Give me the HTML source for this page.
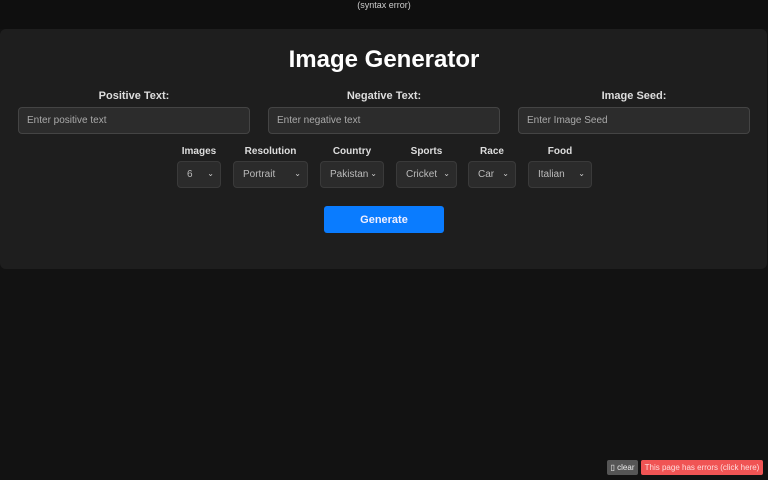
<!DOCTYPE html><html><head><style>
body{margin:0;width:768px;height:480px;background:#121212;font-family:"Liberation Sans",sans-serif;position:relative;overflow:hidden;color:#eee}
.a{position:absolute}
.top{left:0;top:0;width:768px;height:29px;background:#0f0f0f;text-align:center;font-size:9px;color:#ccc;line-height:10px}
.card{left:0;top:29px;width:767px;height:240px;background:#1e1e1e;border-radius:6px}
h1{position:absolute;left:0;width:768px;top:46px;margin:0;text-align:center;font-size:24px;color:#fff;font-weight:bold}
.lb{font-size:11px;font-weight:bold;color:#ddd;text-align:center}
.in{background:#2c2c2c;border:1px solid #444;border-radius:4px;font-size:10px;color:#aaa;line-height:26px;padding-left:8px;box-sizing:border-box;height:27px}
.sl{top:161px;height:27px;background:#2b2b2b;border:1px solid #3a3a3a;border-radius:4px;box-sizing:border-box;font-size:10px;color:#bbb;line-height:26px}
.sl span{position:absolute;left:9px}
.sl i{position:absolute;right:6px;top:-1px;font-style:normal;font-size:8px;color:#ccc}
.sm{font-size:10px;font-weight:bold;color:#ddd;text-align:center;top:146px}
</style></head><body>
<div class="a top">(syntax error)</div>
<div class="a card"></div>
<h1>Image Generator</h1>
<div class="a lb" style="left:18px;width:232px;top:90px">Positive Text:</div>
<div class="a lb" style="left:268px;width:232px;top:90px">Negative Text:</div>
<div class="a lb" style="left:518px;width:232px;top:90px">Image Seed:</div>
<div class="a in" style="left:18px;top:107px;width:232px">Enter positive text</div>
<div class="a in" style="left:268px;top:107px;width:232px">Enter negative text</div>
<div class="a in" style="left:518px;top:107px;width:232px">Enter Image Seed</div>
<div class="a sm" style="left:177px;width:44px">Images</div>
<div class="a sm" style="left:228px;width:85px">Resolution</div>
<div class="a sm" style="left:320px;width:64px">Country</div>
<div class="a sm" style="left:396px;width:61px">Sports</div>
<div class="a sm" style="left:468px;width:48px">Race</div>
<div class="a sm" style="left:528px;width:64px">Food</div>
<div class="a sl" style="left:177px;width:44px"><span>6</span><i>⌄</i></div>
<div class="a sl" style="left:233px;width:75px"><span>Portrait</span><i>⌄</i></div>
<div class="a sl" style="left:320px;width:64px"><span>Pakistan</span><i>⌄</i></div>
<div class="a sl" style="left:396px;width:61px"><span>Cricket</span><i>⌄</i></div>
<div class="a sl" style="left:468px;width:48px"><span>Car</span><i>⌄</i></div>
<div class="a sl" style="left:528px;width:64px"><span>Italian</span><i>⌄</i></div>
<div class="a" style="left:324px;top:206px;width:120px;height:27px;background:#0a7cff;border-radius:3px;color:#eef;font-size:11px;font-weight:bold;text-align:center;line-height:28px">Generate</div>
<div class="a" style="left:607px;top:460px;width:31px;height:15px;background:#555;border-radius:2px;font-size:8px;color:#eee;line-height:15px;text-align:center">▯ clear</div>
<div class="a" style="left:641px;top:460px;width:122px;height:15px;background:#f05454;border-radius:2px;font-size:8px;color:#fdd;line-height:15px;text-align:center">This page has errors (click here)</div>
</body></html>
